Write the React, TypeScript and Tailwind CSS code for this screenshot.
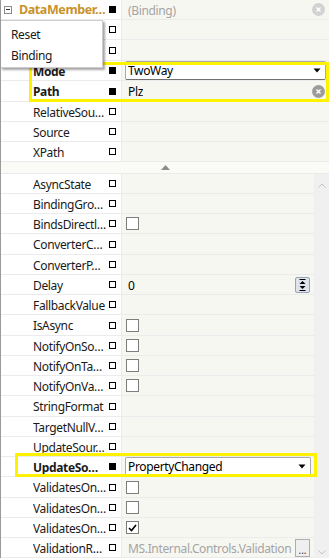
import React from 'react';

type Marker = 'filled' | 'hollow';

const FONT = { fontFamily: '"Noto Sans", "Open Sans", Arial, sans-serif' };

const MarkerBox: React.FC<{ kind: Marker }> = ({ kind }) =>
    kind === 'filled' ? (
        <span className="ml-[1px] w-[7px] h-[7px] shrink-0 bg-black" />
    ) : (
        <span className="ml-[1px] w-[7px] h-[7px] shrink-0 border border-black" />
    );

const ClearButton: React.FC<{ dark?: boolean }> = ({ dark }) => (
    <span
        className={`ml-auto mr-[4px] w-[13px] h-[13px] rounded-full flex items-center justify-center shrink-0 ${
            dark ? 'bg-[#9c9c9c]' : 'bg-[#d2d2d2]'
        }`}
    >
        <svg width="7" height="7" viewBox="0 0 7 7">
            <path d="M1.5 1.5 L5.5 5.5 M5.5 1.5 L1.5 5.5" stroke="#fff" strokeWidth="1.4" />
        </svg>
    </span>
);

const DropTriangle: React.FC = () => (
    <svg width="8" height="5" viewBox="0 0 8 5" className="ml-auto mr-[4px]">
        <path d="M0.5 0.5 L7.5 0.5 L4 4.5 Z" fill="#000" />
    </svg>
);

const Combo: React.FC<{ text: string }> = ({ text }) => (
    <div className="ml-[3px] mr-[3px] flex-1 h-full flex items-center bg-white border border-[#a9a9a9] border-b-[#707070] rounded-[2px] pl-[2px]">
        <span className="text-[12px] tracking-[-0.35px] text-black pt-[1px]">{text}</span>
        <DropTriangle />
    </div>
);

const CheckBox: React.FC<{ checked?: boolean }> = ({ checked }) => (
    <span className="ml-[4px] w-[13px] h-[13px] bg-white border border-[#7d7d7d] flex items-center justify-center">
        {checked && (
            <svg width="9" height="8" viewBox="0 0 9 8">
                <path d="M1 4 L3.5 6.5 L8 1" stroke="#000" strokeWidth="1.6" fill="none" />
            </svg>
        )}
    </span>
);

const Spinner: React.FC = () => (
    <span className="ml-auto mr-[4px] w-[15px] h-[16px] bg-[#dfe3ec] border border-[#9aa3b5] rounded-[2px] flex items-center justify-center">
        <svg width="9" height="12" viewBox="0 0 9 12">
            <path d="M1.5 0.5 H7.5" stroke="#000" />
            <path d="M1.5 5 L7.5 5 L4.5 2 Z" fill="#000" />
            <path d="M1.5 7 L7.5 7 L4.5 10 Z" fill="#000" />
            <path d="M1.5 11.5 H7.5" stroke="#000" />
        </svg>
    </span>
);

interface RowProps {
    name: string;
    marker: Marker;
    bold?: boolean;
    value?: React.ReactNode;
    h?: string;
}

const Row: React.FC<RowProps> = ({ name, marker, bold, value, h = 'h-[20px]' }) => (
    <div className={`flex ${h} border-b border-[#ebebeb] shrink-0`}>
        <div className="w-[121px] shrink-0 flex items-center pl-[32px] pr-[5px] bg-white border-r border-[#ebebeb]">
            <span
                className={`flex-1 min-w-0 overflow-hidden whitespace-nowrap text-[12px] tracking-[-0.35px] text-[#1a1a1a] pt-[2px] ${
                    bold ? 'font-bold' : ''
                }`}
            >
                {name}
            </span>
            <MarkerBox kind={marker} />
        </div>
        <div className="flex-1 min-w-0 flex items-center bg-[#f7f7f2]">{value}</div>
    </div>
);

const ValueText: React.FC<{ text: string; gray?: boolean }> = ({ text, gray }) => (
    <span
        className={`pl-[6px] pt-[2px] text-[12px] tracking-[-0.35px] whitespace-nowrap overflow-hidden ${
            gray ? 'text-[#a4a4a4]' : 'text-black'
        }`}
    >
        {text}
    </span>
);

const lowerRows: RowProps[] = [
    { name: 'AsyncState', marker: 'hollow' },
    { name: 'BindingGro…', marker: 'hollow' },
    { name: 'BindsDirectl…', marker: 'hollow', value: <CheckBox /> },
    { name: 'ConverterC…', marker: 'hollow' },
    { name: 'ConverterP…', marker: 'hollow' },
    {
        name: 'Delay',
        marker: 'hollow',
        value: (
            <>
                <ValueText text="0" />
                <Spinner />
            </>
        ),
    },
    { name: 'FallbackValue', marker: 'hollow' },
    { name: 'IsAsync', marker: 'hollow', value: <CheckBox /> },
    { name: 'NotifyOnSo…', marker: 'hollow', value: <CheckBox /> },
    { name: 'NotifyOnTa…', marker: 'hollow', value: <CheckBox /> },
    { name: 'NotifyOnVa…', marker: 'hollow', value: <CheckBox /> },
    { name: 'StringFormat', marker: 'hollow' },
    { name: 'TargetNullV…', marker: 'hollow' },
    { name: 'UpdateSour…', marker: 'hollow' },
    { name: 'UpdateSo…', marker: 'filled', bold: true, value: <Combo text="PropertyChanged" /> },
    { name: 'ValidatesOn…', marker: 'hollow', value: <CheckBox /> },
    { name: 'ValidatesOn…', marker: 'hollow', value: <CheckBox /> },
    { name: 'ValidatesOn…', marker: 'hollow', value: <CheckBox checked /> },
    {
        name: 'ValidationR…',
        marker: 'hollow',
        value: (
            <>
                <span className="pl-[6px] pt-[2px] flex-1 min-w-0 text-[12px] tracking-[-0.35px] whitespace-nowrap overflow-hidden text-[#a4a4a4]">
                    MS.Internal.Controls.ValidationRuleCollection
                </span>
                <span className="ml-[3px] mr-[4px] w-[15px] h-[18px] bg-[#efefef] border border-[#adadad] flex items-end justify-center text-[10px] leading-[12px] text-[#333] shrink-0">
                    ...
                </span>
            </>
        ),
    },
];

const App: React.FC = () => {
    return (
        <div
            className="relative w-[329px] h-[558px] overflow-hidden bg-white border-l border-[#9a9a9a] flex flex-col"
            style={FONT}
        >
            {/* header row */}
            <div className="flex h-[20px] border-b border-[#ebebeb] shrink-0">
                <div className="w-[121px] shrink-0 flex items-center pl-[3px] pr-[5px] bg-white border-r border-[#ebebeb]">
                    <span className="w-[8px] h-[8px] border border-[#8a8a8a] flex items-center justify-center shrink-0">
                        <span className="w-[4px] h-[1px] bg-[#333]" />
                    </span>
                    <span className="ml-[7px] pt-[2px] flex-1 min-w-0 overflow-hidden whitespace-nowrap text-[12.5px] tracking-[-0.4px] font-bold text-[#c8922c]">
                        DataMember…
                    </span>
                    <MarkerBox kind="filled" />
                </div>
                <div className="flex-1 flex items-center bg-[#f7f7f2]">
                    <ValueText text="(Binding)" gray />
                    <ClearButton />
                </div>
            </div>

            <Row name="" marker="hollow" />
            <Row name="" marker="hollow" h="h-[21px]" />
            <Row name="Mode" marker="filled" bold value={<Combo text="TwoWay" />} />
            <Row
                name="Path"
                marker="filled"
                bold
                h="h-[21px]"
                value={
                    <>
                        <ValueText text="Plz" />
                        <ClearButton dark />
                    </>
                }
            />
            <Row name="RelativeSou…" marker="hollow" />
            <Row name="Source" marker="hollow" />
            <Row name="XPath" marker="hollow" />

            {/* splitter */}
            <div className="h-[12px] shrink-0 border-b border-[#ebebeb] bg-[#fafaf6] flex items-center justify-center">
                <svg width="9" height="5" viewBox="0 0 9 5">
                    <path d="M0 5 L9 5 L4.5 0 Z" fill="#8c8c8c" />
                </svg>
            </div>

            {/* scrolling section */}
            <div className="flex flex-1 min-h-0">
                <div className="flex-1 min-w-0 flex flex-col overflow-hidden">
                    {lowerRows.map((r, i) => (
                        <Row key={i} {...r} h={i % 4 === 3 ? 'h-[21px]' : 'h-[20px]'} />
                    ))}
                </div>
                <div className="w-[15px] shrink-0 bg-[#f0f0f0] flex flex-col items-center justify-between pt-[9px] pb-[3px]">
                    <svg width="8" height="5" viewBox="0 0 8 5">
                        <path d="M0.5 4.5 L4 1 L7.5 4.5" stroke="#c2c2c2" fill="none" />
                    </svg>
                    <svg width="8" height="5" viewBox="0 0 8 5">
                        <path d="M0.5 0.5 L4 4 L7.5 0.5" stroke="#c2c2c2" fill="none" />
                    </svg>
                </div>
            </div>

            {/* highlight boxes */}
            <div className="absolute left-[28px] top-[62px] w-[300px] h-[40px] border-[3px] border-[#fff200] pointer-events-none" />
            <div className="absolute left-[14px] top-[453px] w-[302px] h-[24px] border-[3px] border-[#fff200] pointer-events-none" />

            {/* context menu */}
            <div className="absolute -left-[1px] top-[20px] w-[103px] h-[48px] bg-white border border-[#cccccc] shadow-[2px_2px_2px_rgba(0,0,0,0.35)] flex flex-col pt-[3px]">
                <div className="h-[22px] flex items-center pl-[10px] text-[12px] tracking-[-0.35px] text-[#1a1a1a]">
                    Reset
                </div>
                <div className="h-[22px] flex items-center pl-[10px] text-[12px] tracking-[-0.35px] text-[#1a1a1a]">
                    Binding
                </div>
            </div>
        </div>
    );
};

export default App;
